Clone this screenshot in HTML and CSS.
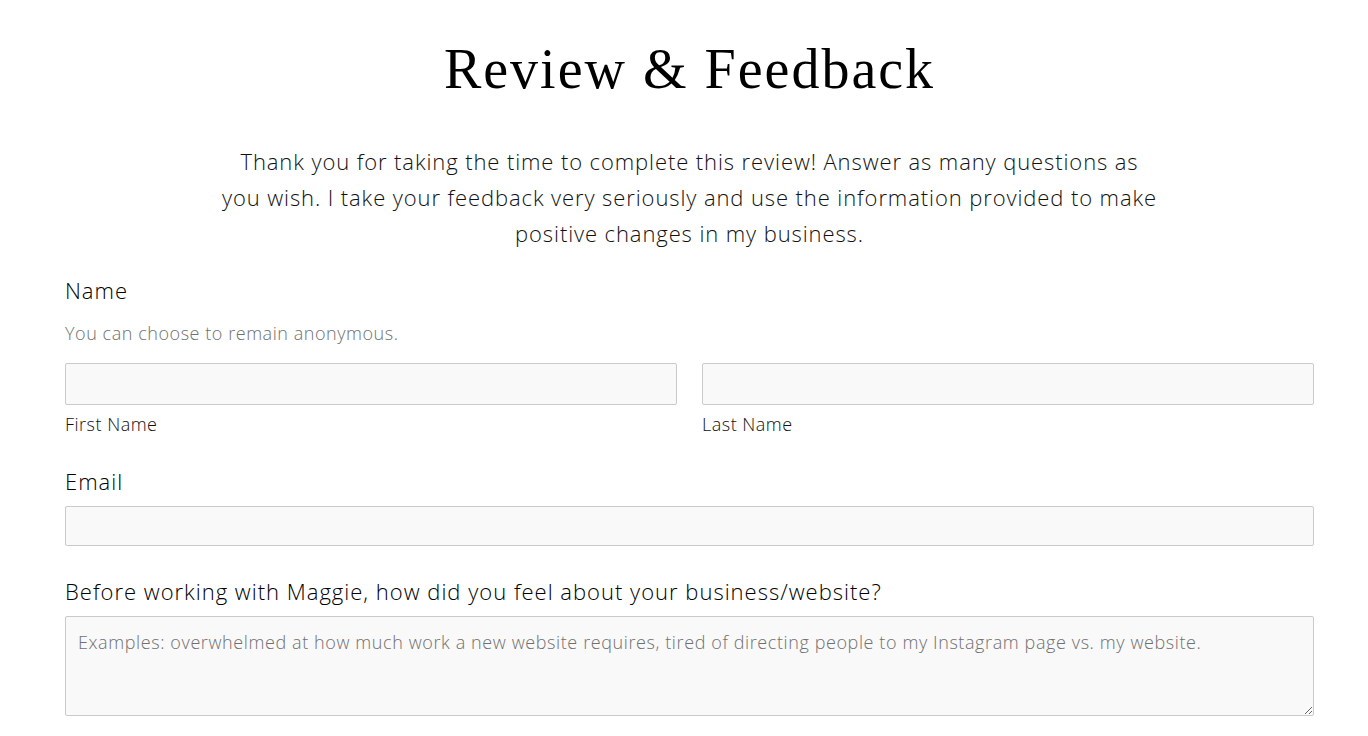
FILE: index.html
```html
<!DOCTYPE html>
<html lang="en">
<head>
<meta charset="utf-8">
<title>Review &amp; Feedback</title>
<link rel="stylesheet" href="styles.css">
</head>
<body>
<main class="page">
  <h1 class="title">Review &amp; Feedback</h1>
  <p class="intro">Thank you for taking the time to complete this review! Answer as many questions as you wish. I take your feedback very seriously and use the information provided to make positive changes in my business.</p>
  <form class="form">
    <fieldset class="field">
      <div class="label">Name</div>
      <div class="help">You can choose to remain anonymous.</div>
      <div class="name-row">
        <div class="name-col">
          <input class="input input-name" type="text">
          <div class="sublabel">First Name</div>
        </div>
        <div class="name-col">
          <input class="input input-name" type="text">
          <div class="sublabel">Last Name</div>
        </div>
      </div>
    </fieldset>
    <div class="field field-email">
      <div class="label">Email</div>
      <input class="input input-email" type="email">
    </div>
    <div class="field field-q">
      <div class="label">Before working with Maggie, how did you feel about your business/website?</div>
      <textarea class="input textarea" placeholder="Examples: overwhelmed at how much work a new website requires, tired of directing people to my Instagram page vs. my website."></textarea>
    </div>
  </form>
</main>
</body>
</html>
```

FILE: styles.css
```css
html, body {
  margin: 0;
  padding: 0;
  background: #ffffff;
}
body {
  font-family: "Open Sans", "Liberation Sans", sans-serif;
  font-weight: 350;
  color: #111111;
  overflow: hidden;
}
.page {
  padding: 0 54px 0 65px;
}
.title {
  margin: 37px 0 0;
  text-align: center;
  font-family: "Liberation Serif", "DejaVu Serif", serif;
  font-weight: 400;
  font-size: 56px;
  line-height: 64px;
  color: #000;
  letter-spacing: 2px;
}
.intro {
  width: 941px;
  margin: 42px auto 0;
  text-align: center;
  font-size: 22px;
  line-height: 36px;
  letter-spacing: 0.9px;
  color: #111111;
}
.form {
  margin-top: 25px;
}
.field {
  border: 0;
  margin: 0;
  padding: 0;
  min-width: 0;
}
.label {
  font-size: 22px;
  line-height: 28px;
  letter-spacing: 1px;
  color: #000;
}
.help {
  margin-top: 18px;
  font-size: 18px;
  line-height: 22px;
  letter-spacing: 0.55px;
  color: #707070;
}
.name-row {
  display: flex;
  gap: 25px;
  margin-top: 19px;
}
.name-col {
  flex: 1;
}
.input {
  display: block;
  box-sizing: border-box;
  width: 100%;
  background: #f9f9f9;
  border: 1px solid #cacaca;
  border-radius: 2px;
  margin: 0;
  font-family: inherit;
  font-weight: 350;
}
.input-name {
  height: 42px;
}
.sublabel {
  margin-top: 8px;
  font-size: 18px;
  line-height: 22px;
  letter-spacing: 0.5px;
  color: #111;
}
.field-email {
  margin-top: 32px;
}
.input-email {
  height: 40px;
  margin-top: 11px;
}
.field-q {
  margin-top: 31px;
}
.textarea {
  height: 100px;
  margin-top: 11px;
  padding: 13px 12px;
  font-size: 18px;
  line-height: 24px;
  letter-spacing: 0.6px;
  resize: vertical;
}
.textarea::placeholder {
  color: #707070;
  opacity: 1;
}
```
